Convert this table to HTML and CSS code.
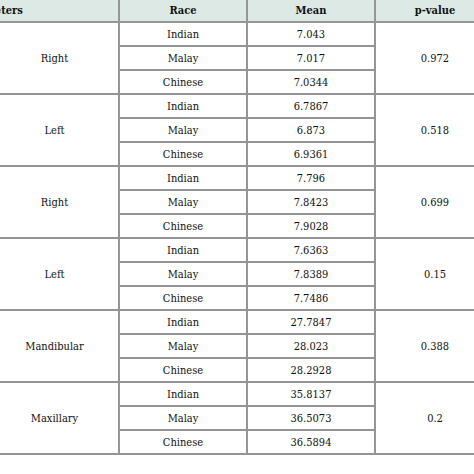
FILE: index.html
```html
<!DOCTYPE html>
<html>
<head>
<meta charset="utf-8">
<link rel="stylesheet" href="styles.css">
</head>
<body>
<table class="data">
  <colgroup>
    <col class="c0"><col class="c1"><col class="c2"><col class="c3"><col class="c4">
  </colgroup>
  <thead>
    <tr class="head"><th colspan="2">Parameters</th><th>Race</th><th>Mean</th><th>p-value</th></tr>
  </thead>
  <tbody>
    <tr><td rowspan="6"></td><td rowspan="3">Right</td><td>Indian</td><td>7.043</td><td rowspan="3">0.972</td></tr>
    <tr><td>Malay</td><td>7.017</td></tr>
    <tr><td>Chinese</td><td>7.0344</td></tr>
    <tr><td rowspan="3">Left</td><td>Indian</td><td>6.7867</td><td rowspan="3">0.518</td></tr>
    <tr><td>Malay</td><td>6.873</td></tr>
    <tr><td>Chinese</td><td>6.9361</td></tr>
    <tr><td rowspan="6"></td><td rowspan="3">Right</td><td>Indian</td><td>7.796</td><td rowspan="3">0.699</td></tr>
    <tr><td>Malay</td><td>7.8423</td></tr>
    <tr><td>Chinese</td><td>7.9028</td></tr>
    <tr><td rowspan="3">Left</td><td>Indian</td><td>7.6363</td><td rowspan="3">0.15</td></tr>
    <tr><td>Malay</td><td>7.8389</td></tr>
    <tr><td>Chinese</td><td>7.7486</td></tr>
    <tr><td rowspan="6"></td><td rowspan="3">Mandibular</td><td>Indian</td><td>27.7847</td><td rowspan="3">0.388</td></tr>
    <tr><td>Malay</td><td>28.023</td></tr>
    <tr><td>Chinese</td><td>28.2928</td></tr>
    <tr><td rowspan="3">Maxillary</td><td>Indian</td><td>35.8137</td><td rowspan="3">0.2</td></tr>
    <tr><td>Malay</td><td>36.5073</td></tr>
    <tr><td>Chinese</td><td>36.5894</td></tr>
  </tbody>
</table>
</body>
</html>
```
FILE: styles.css
```css
html, body {
  margin: 0;
  padding: 0;
  background: #ffffff;
}
body {
  width: 474px;
  height: 474px;
  overflow: hidden;
  font-family: "DejaVu Serif", "Liberation Serif", serif;
  font-stretch: condensed;
  color: #111111;
}
.data {
  border-collapse: collapse;
  table-layout: fixed;
  width: 632px;
  margin-left: -138px;
  font-size: 11px;
}
.c0 { width: 127px; }
.c1 { width: 129px; }
.c2 { width: 128px; }
.c3 { width: 128px; }
.c4 { width: 120px; }
.data th,
.data td {
  border: 2px solid #959595;
  padding: 0;
  text-align: center;
  vertical-align: middle;
}
.data th {
  background: #dde9e4;
  font-weight: bold;
  border-top: none;
  height: 21px;
}
.data tbody tr {
  height: 24px;
}
```
